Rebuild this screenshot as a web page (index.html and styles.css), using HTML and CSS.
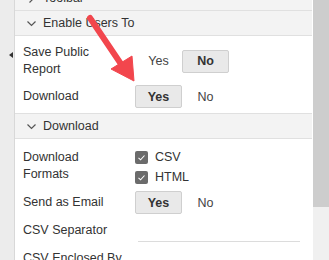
FILE: index.html
```html
<!DOCTYPE html>
<html lang="en">
<head>
    <meta charset="UTF-8">
    <meta name="viewport" content="width=device-width, initial-scale=1.0">
    <title>Report Options</title>
    <link rel="stylesheet" href="styles.css">
</head>
<body>
    <div class="layout">
        <div class="rail"><span class="rail-caret"></span></div>

        <div class="panel">
            <div class="section-head">
                <svg class="chev" width="9" height="9" viewBox="0 0 9 9"><polyline points="2.5,0.5 6.5,4.5 2.5,8.5" /></svg>
                Toolbar
            </div>

            <div class="section-head">
                <svg class="chev" width="9" height="9" viewBox="0 0 9 9"><polyline points="0.5,2.5 4.5,6.5 8.5,2.5" /></svg>
                Enable Users To
            </div>
            <div class="section-body first">
                <div class="field">
                    <div class="label">Save Public<br>Report</div>
                    <div class="toggle">
                        <span class="opt">Yes</span>
                        <span class="opt on">No</span>
                    </div>
                </div>
                <div class="field">
                    <div class="label">Download</div>
                    <div class="toggle">
                        <span class="opt on">Yes</span>
                        <span class="opt">No</span>
                    </div>
                </div>
            </div>

            <div class="section-head">
                <svg class="chev" width="9" height="9" viewBox="0 0 9 9"><polyline points="0.5,2.5 4.5,6.5 8.5,2.5" /></svg>
                Download
            </div>
            <div class="section-body">
                <div class="field top">
                    <div class="label">Download<br>Formats</div>
                    <div class="checks">
                        <div class="check"><span class="box"><svg width="13" height="13" viewBox="0 0 13 13"><polyline points="3.5,6.8 5.6,8.8 9.5,4.5" /></svg></span>CSV</div>
                        <div class="check"><span class="box"><svg width="13" height="13" viewBox="0 0 13 13"><polyline points="3.5,6.8 5.6,8.8 9.5,4.5" /></svg></span>HTML</div>
                    </div>
                </div>
                <div class="field">
                    <div class="label">Send as Email</div>
                    <div class="toggle">
                        <span class="opt on">Yes</span>
                        <span class="opt">No</span>
                    </div>
                </div>
                <div class="field">
                    <div class="label">CSV Separator</div>
                    <div class="text-input"></div>
                </div>
                <div class="field">
                    <div class="label">CSV Enclosed By</div>
                    <div class="text-input"></div>
                </div>
            </div>
        </div>

        <div class="scrollbar"><div class="thumb"></div></div>
    </div>

    <!-- annotation arrow drawn over the panel -->
    <svg class="pointer" width="329" height="260" viewBox="0 0 329 260">
        <line x1="90" y1="18" x2="121" y2="64" />
        <polygon points="111,69 132,56 134,81" />
    </svg>
</body>
</html>
```

FILE: styles.css
```css
body {
    margin: 0;
    height: 260px;
    overflow: hidden;
    font-family: "Liberation Sans", Arial, sans-serif;
    font-size: 12.5px;
    color: #333;
    background: #fff;
}

.layout {
    display: flex;
    height: 260px;
}

.rail {
    width: 14px;
    flex-shrink: 0;
    background: #ececec;
    border-right: 1px solid #d8d8d8;
    display: flex;
    justify-content: flex-end;
    padding-top: 52px;
    box-sizing: content-box;
}

.rail-caret {
    width: 0;
    height: 0;
    margin-right: 1px;
    border-top: 3.5px solid transparent;
    border-bottom: 3.5px solid transparent;
    border-right: 4px solid #333;
}

.panel {
    width: 297px;
    flex-shrink: 0;
    margin-top: -14px;
    margin-right: 1px;
}

.section-head {
    height: 24px;
    display: flex;
    align-items: center;
    padding-left: 12px;
    background: #f3f3f3;
    border-bottom: 1px solid #e0e0e0;
    font-size: 12.5px;
}

.chev {
    margin-right: 7px;
    fill: none;
    stroke: #555;
    stroke-width: 1.2;
}

.section-body {
    padding: 8px 0 5px 8px;
    border-bottom: 1px solid #e0e0e0;
    display: flex;
    flex-direction: column;
    gap: 4px;
}

.section-body.first {
    padding-top: 8px;
    gap: 7px;
}

.field {
    display: flex;
    align-items: center;
}

.field.top {
    align-items: flex-start;
}

.label {
    width: 112px;
    flex-shrink: 0;
    line-height: 17px;
}

.field.top .label {
    padding-top: 2px;
}

.toggle {
    display: flex;
}

.opt {
    width: 47px;
    height: 23px;
    box-sizing: border-box;
    display: flex;
    align-items: center;
    justify-content: center;
    color: #444;
}

.opt.on {
    background: #e9e9e9;
    border: 1px solid #cfcfcf;
    border-radius: 2px;
    font-weight: bold;
    color: #333;
}

.checks {
    display: flex;
    flex-direction: column;
}

.check {
    height: 20px;
    display: flex;
    align-items: center;
}

.box {
    width: 13px;
    height: 13px;
    background: #6b6b6b;
    border-radius: 2px;
    margin-right: 7px;
    display: flex;
}

.box svg {
    fill: none;
    stroke: #fff;
    stroke-width: 1.1;
}

.text-input {
    width: 162px;
    height: 23px;
    margin-left: 3px;
    border-bottom: 1px solid #dcdcdc;
}

.scrollbar {
    width: 16px;
    flex-shrink: 0;
    background: #f0f0f0;
}

.thumb {
    height: 207px;
    background: #cdcdcd;
}

.pointer {
    position: absolute;
    top: 0;
    left: 0;
    pointer-events: none;
}

.pointer line {
    stroke: #f2464d;
    stroke-width: 6;
    stroke-linecap: round;
}

.pointer polygon {
    fill: #f2464d;
    stroke: #f2464d;
    stroke-width: 1;
    stroke-linejoin: round;
}
```
